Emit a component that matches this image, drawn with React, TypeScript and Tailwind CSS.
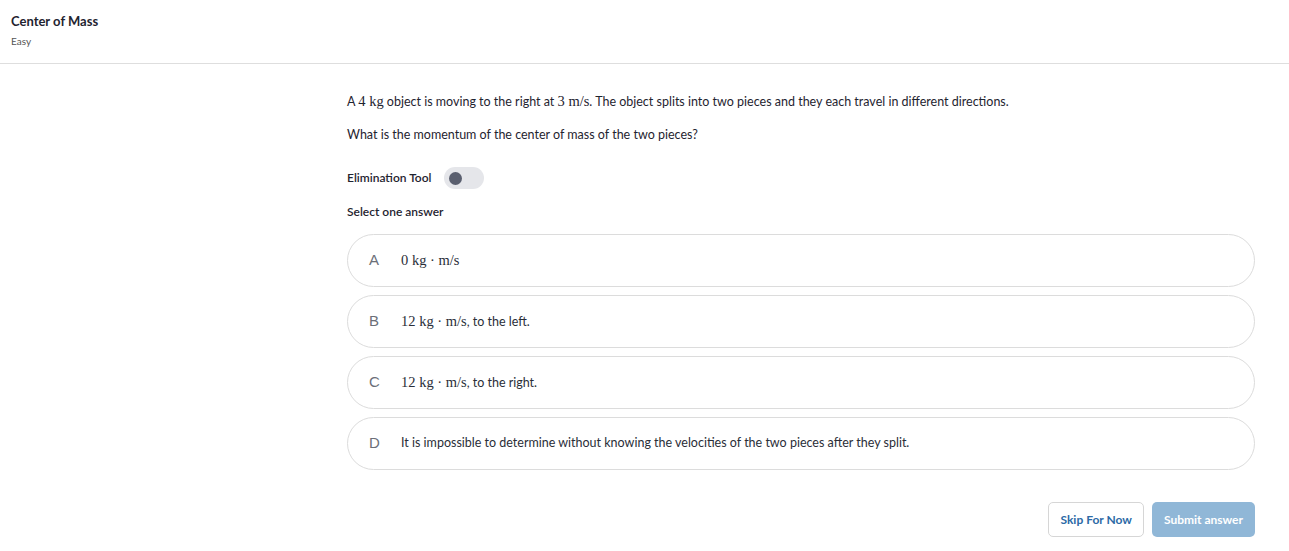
import React, { useState } from 'react';

const M: React.FC<{ children: React.ReactNode }> = ({ children }) => (
  <span className="font-['Liberation_Serif',serif] text-[14.5px]">{children}</span>
);

const options = [
  { key: 'A', body: <><M>0 kg · m/s</M></> },
  { key: 'B', body: <><M>12 kg · m/s</M>, to the left.</> },
  { key: 'C', body: <><M>12 kg · m/s</M>, to the right.</> },
  { key: 'D', body: <>It is impossible to determine without knowing the velocities of the two pieces after they split.</> },
];

const App: React.FC = () => {
  const [on, setOn] = useState(false);
  const [picked, setPicked] = useState<string | null>(null);

  return (
    <div className="min-h-[551px] bg-white font-['Lato','Open_Sans',sans-serif] text-[#1f2430]">
      {/* Header */}
      <div className="border-b border-[#dedede] px-[11px] pt-[13px] pb-[15px]">
        <h1 className="text-[13px] font-bold leading-[16px] text-[#1f2430]">Center of Mass</h1>
        <p className="mt-[6px] text-[10px] leading-[13px] text-[#555]">Easy</p>
      </div>

      <div className="ml-[347px] mr-[34px] pt-[29px]">
        <p className="text-[12.5px] leading-[17px]">
          A <M>4 kg</M> object is moving to the right at <M>3 m/s</M>. The object splits into two pieces and they each travel in different directions.
        </p>
        <p className="mt-[16px] text-[12.5px] leading-[17px]">What is the momentum of the center of mass of the two pieces?</p>

        <div className="mt-[24px] flex items-center gap-[13px]">
          <span className="text-[12px] font-semibold">Elimination Tool</span>
          <button
            onClick={() => setOn(!on)}
            className={`flex h-[22px] w-[40px] items-center rounded-full px-[5px] ${on ? 'justify-end bg-[#90b7d7]' : 'justify-start bg-[#e5e6ea]'}`}
          >
            <span className="h-[13px] w-[13px] rounded-full bg-[#5a5f6f]" />
          </button>
        </div>

        <p className="mt-[14px] text-[12px] font-semibold">Select one answer</p>

        <div className="mt-[13px] flex flex-col gap-[8px]">
          {options.map((o) => (
            <button
              key={o.key}
              onClick={() => setPicked(o.key)}
              className={`flex h-[53px] items-center rounded-full border pl-[21px] text-left ${picked === o.key ? 'border-[#90b7d7]' : 'border-[#dcdcdc]'}`}
            >
              <span className="w-[32px] font-['Liberation_Sans',sans-serif] text-[15px] text-[#6b6f78]">{o.key}</span>
              <span className="text-[12.5px] text-[#2a2e38]">{o.body}</span>
            </button>
          ))}
        </div>

        <div className="mt-[32px] flex justify-end gap-[8px]">
          <button className="h-[35px] rounded-[5px] border border-[#d6d6d6] bg-white px-[11px] text-[12px] font-bold text-[#2c6aa6]">
            Skip For Now
          </button>
          <button className="h-[35px] rounded-[5px] bg-[#90b7d7] px-[12px] text-[12px] font-bold text-white">
            Submit answer
          </button>
        </div>
      </div>
    </div>
  );
};

export default App;
